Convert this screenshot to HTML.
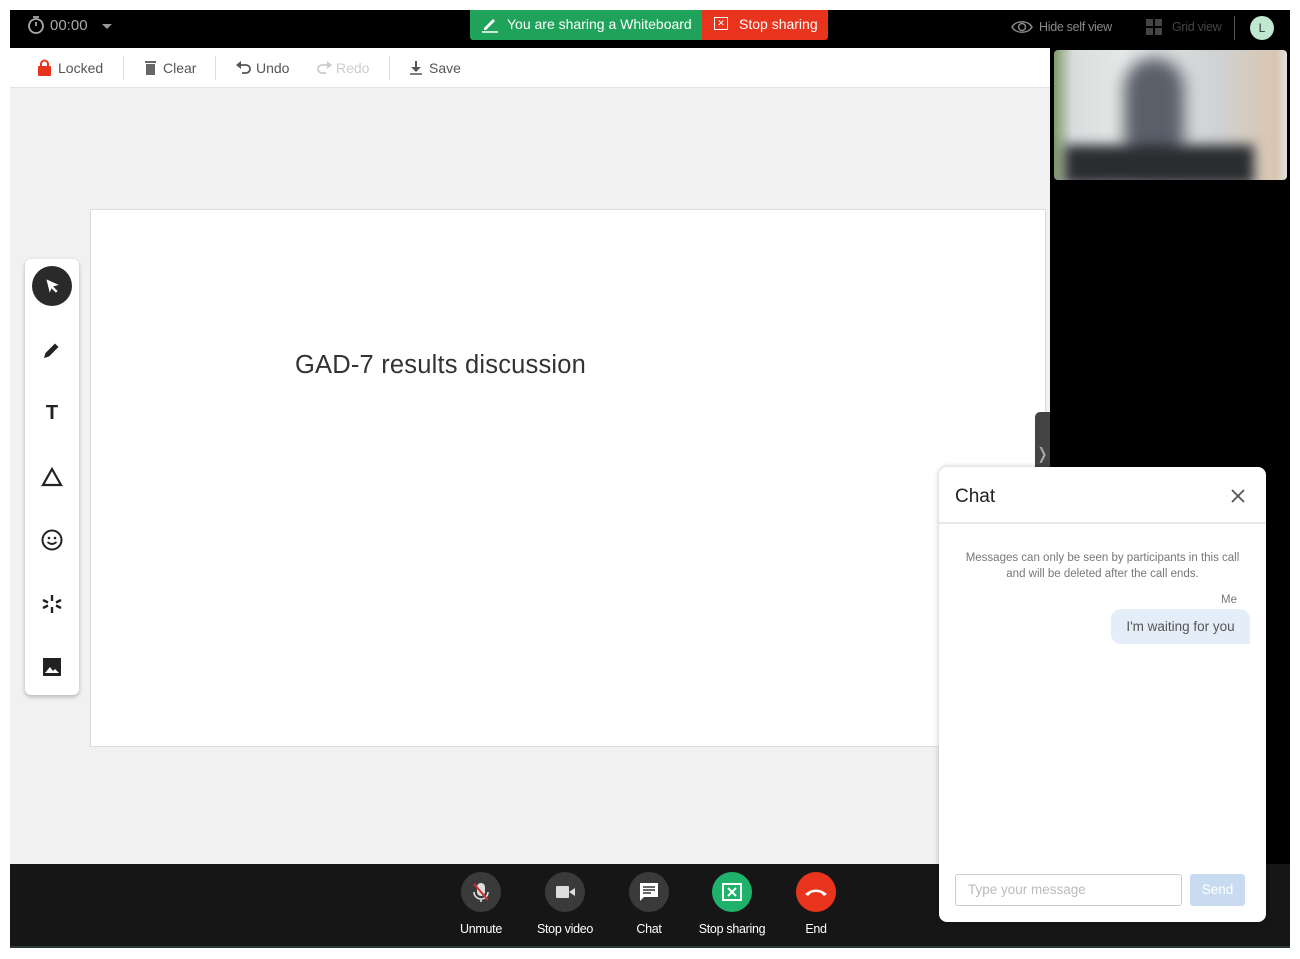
<!DOCTYPE html>
<html><head><meta charset="utf-8"><style>
*{box-sizing:border-box;margin:0;padding:0}
body{width:1300px;height:959px;background:#fff;position:relative;overflow:hidden;font-family:"Liberation Sans",sans-serif}
.a{position:absolute}
.tb span{position:absolute;top:60px;font-size:14px;color:#555}
.sep{position:absolute;top:56px;width:1px;height:24px;background:#ddd}
.btn{position:absolute;top:872px;width:40px;height:40px;border-radius:50%;background:#3a3a3a}
.lbl{position:absolute;top:922px;font-size:12.5px;color:#fff;width:100px;text-align:center}
.tool{position:absolute;left:32px;width:40px;height:40px;display:flex;align-items:center;justify-content:center}
</style></head><body>
<div class="a" style="left:10px;top:10px;width:1280px;height:38px;background:#000"></div>
<svg class="a" style="left:27px;top:15px" width="18" height="20" viewBox="0 0 18 20"><circle cx="9" cy="11" r="7" fill="none" stroke="#aaa" stroke-width="1.8"/><path d="M6 2h6M9 11V7" stroke="#aaa" stroke-width="1.8"/></svg>
<div class="a" style="left:50px;top:17px;font-size:15px;color:#aaa">00:00</div>
<div class="a" style="left:102px;top:24px;border:5px solid transparent;border-top-color:#999"></div>
<div class="a" style="left:470px;top:10px;width:232px;height:30px;background:#1fa35a;border-radius:0 0 0 3px"></div>
<svg class="a" style="left:481px;top:15px" width="18" height="18" viewBox="0 0 18 18"><path d="M3 13L12 4l2 2-9 9H3z" fill="#fff"/><path d="M1 17h16" stroke="#fff" stroke-width="1.5"/></svg>
<div class="a" style="left:507px;top:16px;font-size:14px;color:#fff">You are sharing a Whiteboard</div>
<div class="a" style="left:702px;top:10px;width:126px;height:30px;background:#e8341c;border-radius:0 0 3px 0"></div>
<div class="a" style="left:714px;top:17px;width:14px;height:13px;border:1.5px solid #fff;color:#fff;font-size:9px;line-height:10px;text-align:center">✕</div>
<div class="a" style="left:739px;top:16px;font-size:14px;color:#fff">Stop sharing</div>
<svg class="a" style="left:1011px;top:19px" width="22" height="16" viewBox="0 0 22 16"><path d="M1 8C5 1 17 1 21 8 17 15 5 15 1 8z" fill="none" stroke="#888" stroke-width="1.5"/><circle cx="11" cy="8" r="3.5" fill="none" stroke="#888" stroke-width="1.5"/></svg>
<div class="a" style="left:1039px;top:20px;font-size:12.5px;color:#888;letter-spacing:-0.3px">Hide self view</div>
<svg class="a" style="left:1146px;top:19px" width="16" height="16"><rect width="7" height="7" fill="#444"/><rect x="9" width="7" height="7" fill="#444"/><rect y="9" width="7" height="7" fill="#444"/><rect x="9" y="9" width="7" height="7" fill="#444"/></svg>
<div class="a" style="left:1172px;top:20px;font-size:12.5px;color:#444;letter-spacing:-0.3px">Grid view</div>
<div class="a" style="left:1234px;top:16px;width:1px;height:24px;background:#555"></div>
<div class="a" style="left:1250px;top:16px;width:24px;height:24px;border-radius:50%;background:#bfe8cf;color:#333;font-size:12px;text-align:center;line-height:24px">L</div>
<div class="a" style="left:10px;top:48px;width:1040px;height:40px;background:#fff;border-bottom:1px solid #e2e2e2"></div>
<div class="tb">
<svg class="a" style="left:38px;top:59px" width="13" height="17"><rect x="0" y="7" width="13" height="10" rx="1" fill="#e8341c"/><path d="M3 7V5a3.5 3.5 0 017 0v2" fill="none" stroke="#e8341c" stroke-width="2"/></svg>
<span style="left:58px">Locked</span>
<div class="sep" style="left:123px"></div>
<svg class="a" style="left:145px;top:60px" width="11" height="15"><rect x="0" y="1" width="11" height="2" fill="#666"/><rect x="1" y="4" width="9" height="11" fill="#666"/></svg>
<span style="left:163px">Clear</span>
<div class="sep" style="left:215px"></div>
<svg class="a" style="left:236px;top:61px" width="16" height="13"><path d="M4 4h6a4 4 0 010 8H6" fill="none" stroke="#555" stroke-width="1.8"/><path d="M0 4l5-4v8z" fill="#555"/></svg>
<span style="left:256px">Undo</span>
<svg class="a" style="left:316px;top:61px" width="16" height="13"><path d="M12 4H6a4 4 0 000 8h4" fill="none" stroke="#ccc" stroke-width="1.8"/><path d="M16 4l-5-4v8z" fill="#ccc"/></svg>
<span style="left:336px;color:#ccc">Redo</span>
<div class="sep" style="left:389px"></div>
<svg class="a" style="left:410px;top:61px" width="12" height="14"><path d="M6 0v8" stroke="#555" stroke-width="2"/><path d="M1 6h10l-5 5z" fill="#555"/><path d="M0 13h12" stroke="#555" stroke-width="1.5"/></svg>
<span style="left:429px">Save</span>
</div>
<div class="a" style="left:10px;top:88px;width:1040px;height:776px;background:#f1f1f1"></div>
<div class="a" style="left:90px;top:209px;width:956px;height:538px;background:#fff;border:1px solid #dcdcdc"></div>
<div class="a" style="left:295px;top:351px;font-size:25.5px;color:#333;letter-spacing:0.2px">GAD-7 results discussion</div>
<div class="a" style="left:25px;top:259px;width:54px;height:436px;background:#fff;border-radius:6px;box-shadow:0 2px 4px rgba(0,0,0,.25)"></div>
<div class="tool" style="top:266px;background:#2a2a2a;border-radius:50%"><svg width="20" height="20" viewBox="0 0 18 18"><path d="M4 3l11 5-5 1.5 4 4-1.5 1.5-4-4L7 15z" fill="#fff"/></svg></div>
<div class="tool" style="top:330px"><svg width="20" height="20"><path d="M2 18l1.5-5L13 3.5l3.5 3.5L7 16.5z" fill="#222"/></svg></div>
<div class="tool" style="top:393px;font-size:20px;font-weight:bold;color:#222">T</div>
<div class="tool" style="top:457px"><svg width="22" height="20"><path d="M11 2L20 18H2z" fill="none" stroke="#222" stroke-width="2.2"/></svg></div>
<div class="tool" style="top:520px"><svg width="24" height="24"><circle cx="12" cy="12" r="9.5" fill="none" stroke="#222" stroke-width="2"/><circle cx="9" cy="10" r="1.3" fill="#222"/><circle cx="15" cy="10" r="1.3" fill="#222"/><path d="M7.5 14q4.5 4 9 0" fill="none" stroke="#222" stroke-width="1.8"/></svg></div>
<div class="tool" style="top:584px"><svg width="22" height="22" stroke="#222" stroke-width="2.4"><path d="M11 2v6M11 14v6M2 7l5 2.5M15 12.5l5 2.5M2 15l5-2.5M15 9.5l5-2.5"/></svg></div>
<div class="tool" style="top:647px"><svg width="18" height="18"><rect width="18" height="18" fill="#222"/><path d="M2 15l5-6 3 4 2-2 4 4z" fill="#fff"/></svg></div>
<div class="a" style="left:1050px;top:48px;width:240px;height:816px;background:#000"></div>
<div class="a" style="left:1054px;top:50px;width:233px;height:130px;border-radius:4px;overflow:hidden;background:linear-gradient(90deg,#7f9a6c 0%,#d8dcdc 8%,#e6e9e8 30%,#cfd2d3 70%,#d9c6b0 95%,#e0e0e0 100%)">
<div class="a" style="left:70px;top:8px;width:60px;height:110px;border-radius:30px;background:#5a5f6a;filter:blur(8px)"></div>
<div class="a" style="left:10px;top:95px;width:190px;height:40px;background:#2a2c30;filter:blur(6px)"></div>
</div>
<div class="a" style="left:1035px;top:412px;width:15px;height:60px;background:#444;border-radius:5px 0 0 5px;color:#aaa;font-size:16px;line-height:85px;text-align:center">❭</div>
<div class="a" style="left:10px;top:864px;width:1280px;height:84px;background:#161616;border-bottom:2px solid #2a3a35"></div>
<div class="btn" style="left:461px"><svg width="40" height="40"><rect x="16" y="11" width="8" height="13" rx="4" fill="#ddd"/><path d="M13 20a7 7 0 0014 0M20 27v3" stroke="#ddd" stroke-width="1.6" fill="none"/><path d="M13 12l14 16" stroke="#c33" stroke-width="2"/></svg></div>
<div class="btn" style="left:545px"><svg width="40" height="40"><rect x="11" y="14" width="13" height="12" rx="1" fill="#ddd"/><path d="M24 20l6-4v8z" fill="#ddd"/></svg></div>
<div class="btn" style="left:629px"><svg width="40" height="40"><path d="M11 11h18v14H15l-4 4z" fill="#fff"/><path d="M14 15h12M14 18h12M14 21h8" stroke="#333" stroke-width="1.5"/></svg></div>
<div class="btn" style="left:712px;background:#1fb26a"><svg width="40" height="40"><rect x="11" y="12" width="18" height="16" fill="none" stroke="#fff" stroke-width="2"/><path d="M16 16l8 8M24 16l-8 8" stroke="#fff" stroke-width="2"/></svg></div>
<div class="btn" style="left:796px;background:#e8341c"><svg width="40" height="40"><path d="M9 22q11-9 22 0l-3 2-3-3q-5-2-10 0l-3 3z" fill="#fff"/></svg></div>
<div class="lbl" style="left:431px;letter-spacing:-0.3px">Unmute</div>
<div class="lbl" style="left:515px;letter-spacing:-0.3px">Stop video</div>
<div class="lbl" style="left:599px;letter-spacing:-0.3px">Chat</div>
<div class="lbl" style="left:682px;letter-spacing:-0.3px">Stop sharing</div>
<div class="lbl" style="left:766px;letter-spacing:-0.3px">End</div>
<div class="a" style="left:939px;top:467px;width:327px;height:455px;background:#fff;border-radius:8px;box-shadow:0 0 6px rgba(0,0,0,.25)"></div>
<div class="a" style="left:939px;top:522px;width:327px;height:2px;background:#e8e8e8"></div>
<div class="a" style="left:955px;top:486px;font-size:19px;color:#222">Chat</div>
<svg class="a" style="left:1230px;top:488px" width="16" height="16"><path d="M2 2l12 12M14 2L2 14" stroke="#555" stroke-width="1.8"/></svg>
<div class="a" style="left:950px;top:550px;width:305px;text-align:center;font-size:11.5px;line-height:16px;color:#777">Messages can only be seen by participants in this call<br>and will be deleted after the call ends.</div>
<div class="a" style="left:1221px;top:594px;font-size:11.5px;color:#777">Me</div>
<div class="a" style="left:1111px;top:609px;width:139px;height:35px;background:#e3eef8;border-radius:10px 10px 0 10px;font-size:13.5px;color:#555;line-height:35px;text-align:center">I'm waiting for you</div>
<div class="a" style="left:955px;top:874px;width:227px;height:32px;border:1px solid #ccc;border-radius:3px;font-size:13.5px;color:#bbb;padding-left:12px;line-height:30px">Type your message</div>
<div class="a" style="left:1190px;top:874px;width:55px;height:32px;background:#c8dbf1;border-radius:3px;font-size:13.5px;color:#fff;line-height:32px;text-align:center">Send</div>
</body></html>
